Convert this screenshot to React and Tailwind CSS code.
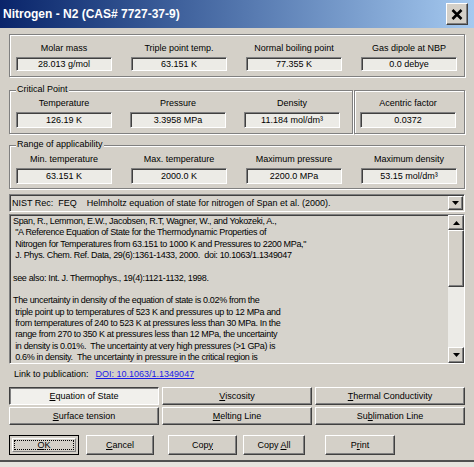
import React from "react";

const raised = "border border-t-white border-l-white border-r-[#404040] border-b-[#404040] shadow-[inset_-1px_-1px_0_#808080]";
const sunken = "border border-t-[#808080] border-l-[#808080] border-r-white border-b-white shadow-[inset_1px_1px_0_#404040]";
const etched = "border border-[#808080] shadow-[inset_1px_1px_0_#fff,1px_1px_0_#fff]";

const general = [
  { label: "Molar mass", value: "28.013 g/mol" },
  { label: "Triple point temp.", value: "63.151 K" },
  { label: "Normal boiling point", value: "77.355 K" },
  { label: "Gas dipole at NBP", value: "0.0 debye" },
];

const critical = [
  { label: "Temperature", value: "126.19 K" },
  { label: "Pressure", value: "3.3958 MPa" },
  { label: "Density", value: "11.184 mol/dm³" },
];

const range = [
  { label: "Min. temperature", value: "63.151 K" },
  { label: "Max. temperature", value: "2000.0 K" },
  { label: "Maximum pressure", value: "2200.0 MPa" },
  { label: "Maximum density", value: "53.15 mol/dm³" },
];

const memo = [
  "Span, R., Lemmon, E.W., Jacobsen, R.T, Wagner, W., and Yokozeki, A.,",
  ' "A Reference Equation of State for the Thermodynamic Properties of',
  ' Nitrogen for Temperatures from 63.151 to 1000 K and Pressures to 2200 MPa,"',
  " J. Phys. Chem. Ref. Data, 29(6):1361-1433, 2000.  doi: 10.1063/1.1349047",
  "",
  "see also: Int. J. Thermophys., 19(4):1121-1132, 1998.",
  "",
  "The uncertainty in density of the equation of state is 0.02% from the",
  " triple point up to temperatures of 523 K and pressures up to 12 MPa and",
  " from temperatures of 240 to 523 K at pressures less than 30 MPa. In the",
  " range from 270 to 350 K at pressures less than 12 MPa, the uncertainty",
  " in density is 0.01%.  The uncertainty at very high pressures (>1 GPa) is",
  " 0.6% in density.  The uncertainty in pressure in the critical region is",
];

// accelerator letter is wrapped in [ ]
const tabs = ["[E]quation of State", "[V]iscosity", "[T]hermal Conductivity", "[S]urface tension", "[M]elting Line", "Su[b]limation Line"];

function Accel({ text }) {
  const m = text.match(/^(.*)\[(.)\](.*)$/);
  if (!m) return <span>{text}</span>;
  return (
    <span className="whitespace-pre">
      {m[1]}
      <span className="underline underline-offset-[1px]">{m[2]}</span>
      {m[3]}
    </span>
  );
}

function Prop({ label, value, tall }) {
  return (
    <div className="flex flex-col items-center w-[96px]">
      <div className="h-[11px] leading-[11px] whitespace-nowrap">{label}</div>
      <div className={`${tall ? "h-[16px] mt-[3px]" : "h-[14px] mt-[3px]"} w-full ${sunken} bg-[#ecebe6] flex items-center justify-center leading-none whitespace-nowrap`}>
        {value}
      </div>
    </div>
  );
}

function Arrow({ up }) {
  return (
    <svg width="7" height="4" viewBox="0 0 7 4">
      <path d={up ? "M0 4 L3.5 0 L7 4 Z" : "M0 0 L7 0 L3.5 4 Z"} fill="#000" />
    </svg>
  );
}

export default function App() {
  return (
    <div className="w-[474px] h-[467px] bg-[#e6e4de] overflow-hidden font-['Liberation_Sans',Arial,sans-serif] text-[9px] text-black">
      <div className="h-[462px] bg-[#d4d0c8] border-b-2 border-b-[#505050] flex flex-col">
        <div className="h-[28px] shrink-0 bg-gradient-to-r from-[#0a246a] to-[#a6caf0] flex items-center justify-between pl-[3px] pr-[6px]">
          <span className="text-white font-bold text-[12px] leading-none">Nitrogen - N2 (CAS# 7727-37-9)</span>
          <div className={`w-[22px] h-[22px] bg-[#d4d0c8] ${raised} flex items-center justify-center`}>
            <svg width="12" height="11" viewBox="0 0 12 11">
              <path d="M1.5 1 L10.5 10 M10.5 1 L1.5 10" stroke="#000" strokeWidth="2.6" />
            </svg>
          </div>
        </div>

        <div className="px-[9px] pt-[6px] flex flex-col">
          <div className={`${etched} h-[43px] pt-[8px] pl-[6px] pr-[7px] flex justify-between`}>
            {general.map((p) => (
              <Prop key={p.label} {...p} />
            ))}
          </div>

          <div className="mt-[13px] h-[44px] flex">
            <div className={`relative ${etched} w-[344px] pt-[7px] pl-[6px] flex gap-[18px]`}>
              <span className="absolute -top-[7px] left-[6px] px-[1px] bg-[#d4d0c8] leading-[11px]">Critical Point</span>
              {critical.map((p) => (
                <Prop key={p.label} {...p} tall />
              ))}
            </div>
            <div className={`${etched} ml-[1px] flex-1 pt-[7px] pl-[5px]`}>
              <Prop label="Acentric factor" value="0.0372" tall />
            </div>
          </div>

          <div className={`relative mt-[11px] h-[44px] ${etched} pt-[8px] pl-[6px] pr-[7px] flex justify-between`}>
            <span className="absolute -top-[7px] left-[6px] px-[1px] bg-[#d4d0c8] leading-[11px]">Range of applicability</span>
            {range.map((p) => (
              <Prop key={p.label} {...p} tall />
            ))}
          </div>

          <div className={`mt-[5px] h-[18px] ${sunken} bg-[#d6d3cc] flex items-center pl-[2px] pr-[1px]`}>
            <span className="flex-1 whitespace-pre leading-none">NIST Rec:  FEQ    Helmholtz equation of state for nitrogen of Span et al. (2000).</span>
            <div className={`w-[15px] h-[14px] bg-[#d4d0c8] ${raised} flex items-center justify-center`}>
              <Arrow />
            </div>
          </div>

          <div className={`mt-[2px] h-[150px] ${sunken} bg-[#d6d3cc] flex`}>
            <div className="flex-1 pl-[3px] pt-[1px] overflow-hidden tracking-[-0.33px]">
              {memo.map((line, i) => (
                <div key={i} className="h-[11.35px] leading-[11.35px] whitespace-pre">
                  {line}
                </div>
              ))}
            </div>
            <div className="w-[16px] flex flex-col bg-[#ecebe7]">
              <div className={`h-[15px] bg-[#d4d0c8] ${raised} flex items-center justify-center`}>
                <Arrow up />
              </div>
              <div className={`h-[57px] bg-[#d4d0c8] ${raised}`} />
              <div className="flex-1" />
              <div className={`h-[16px] bg-[#d4d0c8] ${raised} flex items-center justify-center`}>
                <Arrow />
              </div>
            </div>
          </div>

          <div className="mt-[4px] h-[12px] flex items-center pl-[5px] gap-[7px] leading-none">
            <span>Link to publication:</span>
            <span className="text-[#1a1ae6] underline">DOI: 10.1063/1.1349047</span>
          </div>

          <div className="mt-[7px] grid grid-cols-3 gap-x-[3px] gap-y-[2px]">
            {tabs.map((t, i) => (
              <div
                key={t}
                className={`h-[18px] flex items-center justify-center leading-none ${
                  i === 0
                    ? "bg-[#f1f0ec] border border-t-[#404040] border-l-[#404040] border-r-white border-b-white shadow-[inset_1px_1px_0_#808080]"
                    : `bg-[#d4d0c8] ${raised}`
                }`}
              >
                <Accel text={t} />
              </div>
            ))}
          </div>

          <div className="mt-[10px] h-[20px] flex">
            <div className="w-[70px] border border-black p-[2px] flex">
              <div className="flex-1 flex p-[1px] border border-t-white border-l-white border-r-[#808080] border-b-[#808080]">
                <span className="flex-1 border border-dotted border-black flex items-center justify-center leading-none">
                  <Accel text="[O]K" />
                </span>
              </div>
            </div>
            <div className={`ml-[7px] w-[68px] ${raised} flex items-center justify-center leading-none`}>
              <Accel text="[C]ancel" />
            </div>
            <div className={`ml-[14px] w-[69px] ${raised} flex items-center justify-center leading-none`}>
              <Accel text="Cop[y]" />
            </div>
            <div className={`ml-[6px] w-[62px] ${raised} flex items-center justify-center leading-none`}>
              <Accel text="Copy [A]ll" />
            </div>
            <div className={`ml-[20px] w-[70px] ${raised} flex items-center justify-center leading-none`}>
              <Accel text="P[r]int" />
            </div>
          </div>
        </div>
      </div>
    </div>
  );
}
